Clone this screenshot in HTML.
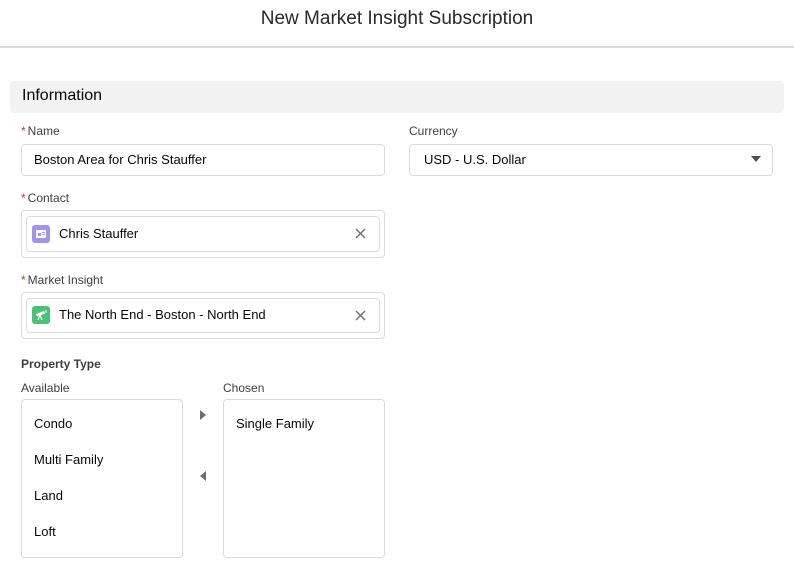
<!DOCTYPE html>
<html><head><style>
body{margin:0;width:794px;height:569px;overflow:hidden;background:#fff;font-family:"Liberation Sans",sans-serif;color:#080707;position:relative}
.a{position:absolute}
.lbl{font-size:12px;color:#3e3e3c}
.req:before{content:"*";color:#c23934;margin-right:2px}
.inp{border:1px solid #dddbda;border-radius:4px;box-sizing:border-box;font-size:13px}
.pill{border:1px solid #dddbda;border-radius:4px;box-sizing:border-box;background:#fff}
.ic{width:18px;height:18px;border-radius:3px}
.li{font-size:13px}
</style></head><body>
<div class="a" style="top:8px;width:794px;text-align:center;font-size:19px;color:#2b2826">New Market Insight Subscription</div>
<div class="a" style="top:46px;left:0;width:794px;height:2px;background:#dddbda"></div>
<div class="a" style="left:10px;top:81px;width:774px;height:32px;background:#f3f2f2;border-radius:4px"></div>
<div class="a" style="left:22px;top:87px;font-size:16px">Information</div>
<div class="a lbl req" style="left:21px;top:124px">Name</div>
<div class="a inp" style="left:21px;top:144px;width:364px;height:32px;padding:7px 12px">Boston Area for Chris Stauffer</div>
<div class="a lbl" style="left:409px;top:124px">Currency</div>
<div class="a inp" style="left:409px;top:144px;width:364px;height:32px;padding:7px 14px">USD - U.S. Dollar</div>
<div class="a" style="left:751px;top:156px;width:0;height:0;border-left:5px solid transparent;border-right:5px solid transparent;border-top:6px solid #514f4d"></div>
<div class="a lbl req" style="left:21px;top:191px">Contact</div>
<div class="a inp" style="left:21px;top:210px;width:364px;height:48px"></div>
<div class="a pill" style="left:26px;top:216px;width:354px;height:36px"></div>
<div class="a ic" style="left:32px;top:225px;background:#a094ed"><svg width="18" height="18"><rect x="4" y="5" width="10" height="8" rx="1" fill="#fff"/><rect x="6" y="8" width="3" height="3" fill="#a094ed"/><rect x="10" y="7" width="3" height="1" fill="#a094ed"/><rect x="10" y="9" width="3" height="1" fill="#a094ed"/></svg></div>
<div class="a li" style="left:59px;top:226px">Chris Stauffer</div>
<svg class="a" style="left:355px;top:228px" width="11" height="11"><path d="M1 1L10 10M10 1L1 10" stroke="#706e6b" stroke-width="1.4"/></svg>
<div class="a lbl req" style="left:21px;top:273px">Market Insight</div>
<div class="a inp" style="left:21px;top:292px;width:364px;height:47px"></div>
<div class="a pill" style="left:26px;top:298px;width:354px;height:35px"></div>
<div class="a ic" style="left:32px;top:306px;background:#4bc076"><svg width="18" height="18"><path d="M4 8L12 5L13 7.5L5 10.5Z" fill="#fff"/><path d="M8 9L6 14M8 9L10 14" stroke="#fff" stroke-width="1.2"/><path d="M14 4V7" stroke="#fff" stroke-width="1"/></svg></div>
<div class="a li" style="left:59px;top:307px">The North End - Boston - North End</div>
<svg class="a" style="left:355px;top:310px" width="11" height="11"><path d="M1 1L10 10M10 1L1 10" stroke="#706e6b" stroke-width="1.4"/></svg>
<div class="a" style="left:21px;top:357px;font-size:12px;font-weight:bold;color:#3e3e3c">Property Type</div>
<div class="a lbl" style="left:21px;top:381px">Available</div>
<div class="a lbl" style="left:223px;top:381px">Chosen</div>
<div class="a inp" style="left:21px;top:399px;width:162px;height:159px"></div>
<div class="a inp" style="left:223px;top:399px;width:162px;height:159px"></div>
<div class="a li" style="left:34px;top:416px">Condo</div>
<div class="a li" style="left:34px;top:452px">Multi Family</div>
<div class="a li" style="left:34px;top:488px">Land</div>
<div class="a li" style="left:34px;top:524px">Loft</div>
<div class="a li" style="left:236px;top:416px">Single Family</div>
<div class="a" style="left:200px;top:410px;border-top:5px solid transparent;border-bottom:5px solid transparent;border-left:6px solid #706e6b"></div>
<div class="a" style="left:200px;top:471px;border-top:5px solid transparent;border-bottom:5px solid transparent;border-right:6px solid #706e6b"></div>
</body></html>
